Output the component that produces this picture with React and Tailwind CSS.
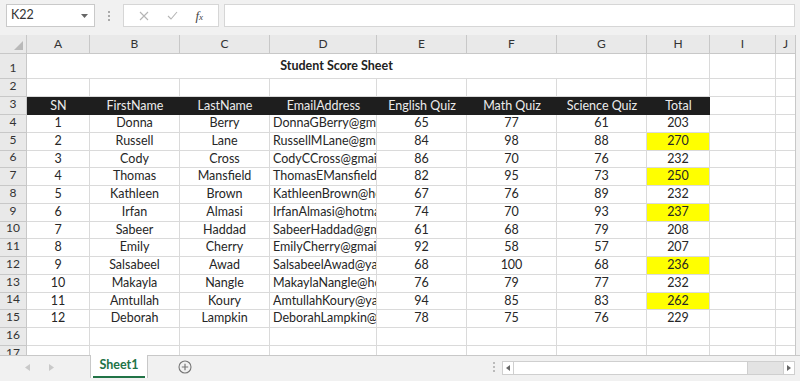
import React from "react";

const COLS = [
  { key: "A", w: 63 },
  { key: "B", w: 90 },
  { key: "C", w: 90 },
  { key: "D", w: 107 },
  { key: "E", w: 90 },
  { key: "F", w: 90 },
  { key: "G", w: 90 },
  { key: "H", w: 63 },
  { key: "I", w: 66 },
  { key: "J", w: 20 },
];

const HEADERS = ["SN", "FirstName", "LastName", "EmailAddress", "English Quiz", "Math Quiz", "Science Quiz", "Total"];

const DATA = [
  [1, "Donna", "Berry", "DonnaGBerry@gmail.com", 65, 77, 61, 203],
  [2, "Russell", "Lane", "RussellMLane@gmail.com", 84, 98, 88, 270],
  [3, "Cody", "Cross", "CodyCCross@gmail.com", 86, 70, 76, 232],
  [4, "Thomas", "Mansfield", "ThomasEMansfield@gmail.com", 82, 95, 73, 250],
  [5, "Kathleen", "Brown", "KathleenBrown@hotmail.com", 67, 76, 89, 232],
  [6, "Irfan", "Almasi", "IrfanAlmasi@hotmail.com", 74, 70, 93, 237],
  [7, "Sabeer", "Haddad", "SabeerHaddad@gmail.com", 61, 68, 79, 208],
  [8, "Emily", "Cherry", "EmilyCherry@gmail.com", 92, 58, 57, 207],
  [9, "Salsabeel", "Awad", "SalsabeelAwad@yahoo.com", 68, 100, 68, 236],
  [10, "Makayla", "Nangle", "MakaylaNangle@hotmail.com", 76, 79, 77, 232],
  [11, "Amtullah", "Koury", "AmtullahKoury@yahoo.com", 94, 85, 83, 262],
  [12, "Deborah", "Lampkin", "DeborahLampkin@yahoo.com", 78, 75, 76, 229],
];

/* row header cell */
function RowNum({ n, h }) {
  return (
    <div
      className="w-[27px] shrink-0 flex items-end justify-center pb-[1px] bg-[#e9e9e9] border-r border-b border-[#c8c8c8] text-[#333] text-[12px]"
      style={{ height: h }}
    >
      {n}
    </div>
  );
}

function Cell({ w, children, className = "" }) {
  return (
    <div
      className={`shrink-0 h-full flex items-center border-r border-b border-[#dadada] overflow-hidden whitespace-nowrap ${className}`}
      style={{ width: w }}
    >
      {children}
    </div>
  );
}

function EmptyRow({ n, h }) {
  return (
    <div className="flex" style={{ height: h }}>
      <RowNum n={n} h={h} />
      {COLS.map(c => (
        <Cell key={c.key} w={c.w} />
      ))}
    </div>
  );
}

export default function App() {
  const rowH = 17.75;

  return (
    <div
      className="w-[800px] h-[381px] overflow-hidden bg-[#f1f1f1] flex flex-col text-[#262626]"
      style={{ fontFamily: "Lato, 'Open Sans', sans-serif" }}
    >
      {/* Formula bar */}
      <div className="h-[35px] shrink-0 flex items-start pt-[4px] pl-[6px] pr-[5px]">
        <div className="w-[89px] h-[23px] bg-white border border-[#c9c9c9] flex items-center justify-between pl-[4px] pr-[6px] text-[12.5px] text-[#333]">
          <span>K22</span>
          <svg width="7" height="4" viewBox="0 0 7 4">
            <path d="M0 0 L7 0 L3.5 4 Z" fill="#666" />
          </svg>
        </div>
        <div className="w-[28px] h-[23px] flex flex-col items-center justify-center gap-[2px]">
          <span className="w-[2px] h-[2px] bg-[#aaa]" />
          <span className="w-[2px] h-[2px] bg-[#aaa]" />
          <span className="w-[2px] h-[2px] bg-[#aaa]" />
        </div>
        <div className="w-[96px] h-[23px] bg-white border border-[#d6d6d6] flex items-center justify-around px-[6px]">
          <svg width="10" height="10" viewBox="0 0 10 10">
            <path d="M1 1 L9 9 M9 1 L1 9" stroke="#b5b5b5" strokeWidth="1.1" fill="none" />
          </svg>
          <svg width="11" height="9" viewBox="0 0 11 9">
            <path d="M1 5 L4 8 L10 1" stroke="#b5b5b5" strokeWidth="1.1" fill="none" />
          </svg>
          <span className="italic text-[13px] text-[#444]" style={{ fontFamily: "'Liberation Serif', serif" }}>
            f<span className="text-[9px]">x</span>
          </span>
        </div>
        <div className="flex-1 ml-[5px] h-[23px] bg-white border border-[#d6d6d6]" />
      </div>

      {/* Grid */}
      <div className="h-[320px] shrink-0 overflow-hidden flex">
        <div className="w-[796px] shrink-0 flex flex-col overflow-hidden border-r border-[#c8c8c8] bg-white">
          {/* column headers */}
          <div className="flex h-[19px] shrink-0 bg-[#e9e9e9]">
            <div className="w-[27px] shrink-0 h-full border-r border-b border-[#c8c8c8] relative">
              <svg className="absolute right-[3px] bottom-[3px]" width="9" height="9" viewBox="0 0 9 9">
                <path d="M9 0 L9 9 L0 9 Z" fill="#b9b9b9" />
              </svg>
            </div>
            {COLS.map(c => (
              <div
                key={c.key}
                className="shrink-0 h-full flex items-center justify-center border-r border-b border-[#c8c8c8] text-[12px] text-[#333]"
                style={{ width: c.w }}
              >
                {c.key}
              </div>
            ))}
          </div>

          {/* row 1 - title */}
          <div className="flex h-[25px] shrink-0">
            <RowNum n={1} h={25} />
            <Cell w={620} className="justify-center items-end pb-[2px] font-bold text-[12.5px] text-[#222]">
              Student Score Sheet
            </Cell>
            <Cell w={63} />
            <Cell w={66} />
            <Cell w={20} />
          </div>

          {/* row 2 */}
          <EmptyRow n={2} h={18} />

          {/* row 3 - header */}
          <div className="flex h-[18px] shrink-0">
            <RowNum n={3} h={18} />
            {HEADERS.map((t, i) => (
              <div
                key={t}
                className="shrink-0 h-full flex items-center justify-center bg-[#1e1e1e] text-[#ececec] text-[12.5px] whitespace-nowrap"
                style={{ width: COLS[i].w }}
              >
                {t}
              </div>
            ))}
            <Cell w={66} />
            <Cell w={20} />
          </div>

          {/* data rows */}
          {DATA.map((r, idx) => (
            <div key={r[0]} className="flex shrink-0" style={{ height: rowH }}>
              <RowNum n={idx + 4} h={rowH} />
              {r.map((v, i) => {
                const hi = i === 7 && v >= 236;
                return (
                  <Cell
                    key={i}
                    w={COLS[i].w}
                    className={`text-[12.5px] ${i === 3 ? "justify-start pl-[3px]" : "justify-center"} ${hi ? "bg-[#ffff00]" : ""}`}
                  >
                    {v}
                  </Cell>
                );
              })}
              <Cell w={66} />
              <Cell w={20} />
            </div>
          ))}

          <EmptyRow n={16} h={rowH} />
          <EmptyRow n={17} h={rowH} />
        </div>
      </div>

      {/* Sheet tabs */}
      <div className="flex-1 flex items-start border-t border-[#c8c8c8]">
        <div className="w-[90px] h-[22px] flex items-center pl-[25px] gap-[19px]">
          <svg width="5" height="7" viewBox="0 0 5 7">
            <path d="M5 0 L0 3.5 L5 7 Z" fill="#c9c9c9" />
          </svg>
          <svg width="5" height="7" viewBox="0 0 5 7">
            <path d="M0 0 L5 3.5 L0 7 Z" fill="#c9c9c9" />
          </svg>
        </div>
        <div className="w-[58px] h-[23px] -mt-[1px] bg-white border-x border-[#c8c8c8] flex flex-col">
          <div className="flex-1 flex items-center justify-center font-bold text-[12.5px] text-[#217346]">
            Sheet1
          </div>
          <div className="h-[2px] mx-[2px] bg-[#217346]" />
        </div>
        <div className="w-[74px] h-[22px] flex items-center justify-center">
          <svg width="14" height="14" viewBox="0 0 14 14">
            <circle cx="7" cy="7" r="6" stroke="#777" strokeWidth="1.1" fill="none" />
            <path d="M7 3.8 V10.2 M3.8 7 H10.2" stroke="#777" strokeWidth="1.2" />
          </svg>
        </div>
        <div className="flex-1" />
        <div className="w-[14px] h-[22px] flex flex-col items-center justify-center gap-[2px]">
          <span className="w-[2px] h-[2px] bg-[#bbb]" />
          <span className="w-[2px] h-[2px] bg-[#bbb]" />
          <span className="w-[2px] h-[2px] bg-[#bbb]" />
        </div>
        <div className="w-[293px] h-[14px] mt-[5px] mr-[5px] ml-[1px] flex items-center border border-[#cfcfcf] bg-[#e3e3e3]">
          <div className="w-[11px] h-full bg-white border-r border-[#cfcfcf] flex items-center justify-center">
            <svg width="4" height="6" viewBox="0 0 4 6">
              <path d="M4 0 L0 3 L4 6 Z" fill="#666" />
            </svg>
          </div>
          <div className="w-[234px] h-full bg-white border-r border-[#cfcfcf]" />
          <div className="flex-1" />
          <div className="w-[11px] h-full bg-white border-l border-[#cfcfcf] flex items-center justify-center">
            <svg width="4" height="6" viewBox="0 0 4 6">
              <path d="M0 0 L4 3 L0 6 Z" fill="#666" />
            </svg>
          </div>
        </div>
      </div>
    </div>
  );
}
